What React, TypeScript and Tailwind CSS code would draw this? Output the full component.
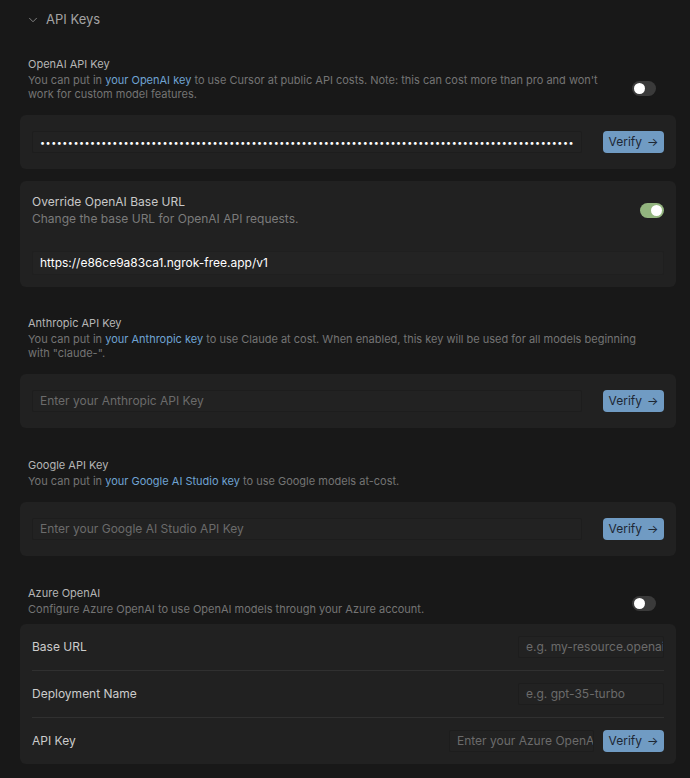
import React from 'react';
import { ChevronDown } from 'lucide-react';

const font = { fontFamily: 'Inter, "Noto Sans", sans-serif' };

export default function App() {
  return (
    <div style={font} className="w-[690px] h-[778px] bg-[#181818] overflow-hidden pl-5 pr-[14px] antialiased">
      {/* header */}
      <div className="flex items-center h-[27px] pt-[12px] pl-[6px] text-[13px] text-[#a3a3a3]">
        <ChevronDown className="w-[14px] h-[14px] text-[#909090] mr-[6px]" strokeWidth={1.5} />
        API Keys
      </div>

      {/* OpenAI */}
      <SectionHead
        title="OpenAI API Key"
        toggle="off"
        className="mt-[30px]"
        desc={
          <>
            You can put in <Link>your OpenAI key</Link> to use Cursor at public API costs. Note: this can cost more than pro and won't work for custom model features.
          </>
        }
      />
      <div className="mt-[14px] bg-[#212121] rounded-[6px] px-3 py-4 flex items-center gap-[21px]">
        <div className="flex-1 h-[22px] border border-[#1d1d1d] bg-[#222222] rounded-[2px] pl-[7px] overflow-hidden flex items-center">
          <span className="text-[9px] text-white whitespace-nowrap tracking-[0.5px] leading-none">
            {'•'.repeat(96)}
          </span>
        </div>
        <VerifyButton />
      </div>

      {/* Override base URL */}
      <div className="mt-3 bg-[#212121] rounded-[6px] px-3 pt-3 pb-3">
        <div className="flex items-center justify-between">
          <div className="leading-[17px] text-[12px]">
            <div className="text-[#c8c8c8]">Override OpenAI Base URL</div>
            <div className="text-[#7b7b7b]">Change the base URL for OpenAI API requests.</div>
          </div>
          <Toggle on />
        </div>
        <div className="mt-[24px] h-[24px] border border-[#1f1f1f] bg-[#232323] rounded-[2px] pl-[7px] flex items-center text-[12px] text-white">
          https://e86ce9a83ca1.ngrok-free.app/v1
        </div>
      </div>

      {/* Anthropic */}
      <SectionHead
        title="Anthropic API Key"
        className="mt-[29px]"
        desc={
          <>
            You can put in <Link>your Anthropic key</Link> to use Claude at cost. When enabled, this key will be used for all models beginning with "claude-".
          </>
        }
      />
      <KeyCard placeholder="Enter your Anthropic API Key" />

      {/* Google */}
      <SectionHead
        title="Google API Key"
        className="mt-[30px]"
        desc={
          <>
            You can put in <Link>your Google AI Studio key</Link> to use Google models at-cost.
          </>
        }
      />
      <KeyCard placeholder="Enter your Google AI Studio API Key" />

      {/* Azure */}
      <SectionHead
        title="Azure OpenAI"
        toggle="off"
        className="mt-[30px]"
        desc={<>Configure Azure OpenAI to use OpenAI models through your Azure account.</>}
      />
      <div className="mt-[8px] bg-[#212121] rounded-[6px] px-3">
        <AzureRow label="Base URL">
          <Field placeholder="e.g. my-resource.openai.azure.com" className="w-[146px]" />
        </AzureRow>
        <AzureRow label="Deployment Name">
          <Field placeholder="e.g. gpt-35-turbo" className="w-[146px]" />
        </AzureRow>
        <AzureRow label="API Key" last>
          <div className="flex items-center gap-[9px]">
            <Field placeholder="Enter your Azure OpenAI API Key" className="w-[145px]" />
            <VerifyButton />
          </div>
        </AzureRow>
      </div>
    </div>
  );
}

const Link = ({ children }: { children: React.ReactNode }) => (
  <span className="text-[#6fa3d3]">{children}</span>
);

interface SectionHeadProps {
  title: string;
  desc: React.ReactNode;
  toggle?: 'off';
  className?: string;
}

const SectionHead = ({ title, desc, toggle, className = '' }: SectionHeadProps) => (
  <div className={`flex items-end justify-between gap-4 pl-2 pr-5 ${className}`}>
    <div className={`text-[11px] leading-[14px] ${toggle ? 'max-w-[590px]' : ''}`}>
      <div className="text-[#b5b5b5] mb-[2px]">{title}</div>
      <div className="text-[#747474]">{desc}</div>
    </div>
    {toggle && (
      <div className="mb-[5px] shrink-0">
        <Toggle />
      </div>
    )}
  </div>
);

const Toggle = ({ on = false }: { on?: boolean }) => (
  <div
    className={`w-[24px] h-[15px] rounded-full flex items-center px-[2px] ${
      on ? 'bg-[#93b57f] justify-end' : 'bg-[#3a3a3a] justify-start'
    }`}
  >
    <div className="w-[11px] h-[11px] rounded-full bg-white" />
  </div>
);

const VerifyButton = () => (
  <button className="h-[22px] w-[61px] shrink-0 rounded-[4px] bg-[#709bc3] text-[#1d2733] text-[12px] flex items-center justify-center gap-[5px]">
    Verify <span className="text-[12px] leading-none">→</span>
  </button>
);

const KeyCard = ({ placeholder }: { placeholder: string }) => (
  <div className="mt-[14px] bg-[#212121] rounded-[6px] px-3 py-4 flex items-center gap-[21px]">
    <div className="flex-1 h-[22px] border border-[#1d1d1d] bg-[#222222] rounded-[2px] pl-[7px] flex items-center text-[12px] text-[#6b6b6b]">
      {placeholder}
    </div>
    <VerifyButton />
  </div>
);

const Field = ({ placeholder, className = '' }: { placeholder: string; className?: string }) => (
  <div
    className={`h-[22px] border border-[#1d1d1d] bg-[#222222] rounded-[2px] pl-[7px] flex items-center overflow-hidden whitespace-nowrap text-[12px] text-[#6b6b6b] ${className}`}
  >
    {placeholder}
  </div>
);

const AzureRow = ({ label, children, last = false }: { label: string; children: React.ReactNode; last?: boolean }) => (
  <div className={`flex items-center justify-between py-3 ${last ? '' : 'border-b border-[#303030]'}`}>
    <span className="text-[12px] text-[#cccccc]">{label}</span>
    {children}
  </div>
);
